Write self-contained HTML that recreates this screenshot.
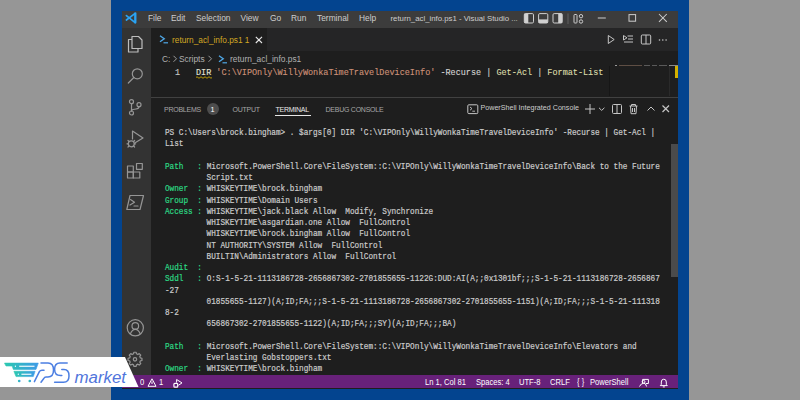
<!DOCTYPE html>
<html><head><meta charset="utf-8">
<style>
*{margin:0;padding:0;box-sizing:border-box}
html,body{width:800px;height:400px;overflow:hidden;background:#969696;font-family:"Liberation Sans",sans-serif;position:relative}
.a{position:absolute}
.t{position:absolute;white-space:pre;line-height:1}
svg{position:absolute;overflow:visible}
.mono{font-family:"Liberation Mono",monospace}
.term{position:absolute;left:164.5px;top:127px;font-family:"Liberation Mono",monospace;font-size:9.7px;color:#cccccc;line-height:11.25px;white-space:pre;transform:scaleX(0.7955);transform-origin:0 0;-webkit-text-stroke-width:0.22px}
.g{color:#2dd985}
.st{top:378px;font-size:8.9px;color:#fff;transform:scaleX(0.855);transform-origin:0 0}
</style></head><body>
<!-- blue frame -->
<div class="a" style="left:111px;top:0;width:578px;height:400px;background:#03448f"></div>
<!-- window -->
<div class="a" style="left:122px;top:10.5px;width:556px;height:378px;background:#1e1e1e"></div>
<!-- title bar -->
<div class="a" style="left:122px;top:10.5px;width:556px;height:17px;background:#3c3c3c"></div>
<!-- activity bar -->
<div class="a" style="left:122px;top:27.5px;width:29px;height:347px;background:#333333"></div>
<!-- tab strip -->
<div class="a" style="left:151px;top:27.5px;width:527px;height:23px;background:#252526"></div>
<div class="a" style="left:151px;top:27.5px;width:115.5px;height:23px;background:#1e1e1e"></div>
<!-- panel border -->
<div class="a" style="left:151px;top:96.5px;width:527px;height:1px;background:#414141"></div>
<!-- status bar -->
<div class="a" style="left:122px;top:374.8px;width:556px;height:13.7px;background:#68217a"></div>

<!-- title menu -->
<div class="t" style="left:148px;top:14px;font-size:8.4px;color:#cccccc">File</div>
<div class="t" style="left:171px;top:14px;font-size:8.4px;color:#cccccc">Edit</div>
<div class="t" style="left:196px;top:14px;font-size:8.4px;color:#cccccc">Selection</div>
<div class="t" style="left:240.5px;top:14px;font-size:8.4px;color:#cccccc">View</div>
<div class="t" style="left:270px;top:14px;font-size:8.4px;color:#cccccc">Go</div>
<div class="t" style="left:291px;top:14px;font-size:8.4px;color:#cccccc">Run</div>
<div class="t" style="left:317px;top:14px;font-size:8.4px;color:#cccccc">Terminal</div>
<div class="t" style="left:359px;top:14px;font-size:8.4px;color:#cccccc">Help</div>
<div class="t" style="left:390.5px;top:14.5px;font-size:7.8px;color:#cccccc">return_acl_info.ps1 - Visual Studio ...</div>

<!-- vscode logo -->
<svg style="left:125px;top:12px" width="13" height="12" viewBox="0 0 13 12">
  <g stroke="#2aa4f4" stroke-linecap="round"><line x1="10.3" y1="1.5" x2="10.3" y2="10.5" stroke-width="2.3"/><line x1="9.8" y1="1.6" x2="1.4" y2="8" stroke-width="1.7"/><line x1="9.8" y1="10.4" x2="1.4" y2="3.6" stroke-width="1.7"/></g>
</svg>

<!-- layout icons -->
<svg style="left:523px;top:13px" width="62" height="12" viewBox="0 0 62 12">
  <rect x="1.3" y="0.6" width="9.2" height="9.4" rx="1.2" fill="none" stroke="#d0d0d0" stroke-width="1"/>
  <rect x="1.3" y="0.6" width="4" height="9.4" fill="#d0d0d0"/>
  <rect x="15.6" y="0.6" width="9.2" height="9.4" rx="1.2" fill="none" stroke="#d0d0d0" stroke-width="1"/>
  <rect x="15.6" y="6.4" width="9.2" height="3.6" fill="#d0d0d0"/>
  <rect x="30" y="0.6" width="9.2" height="9.4" rx="1.2" fill="none" stroke="#d0d0d0" stroke-width="1"/>
  <rect x="35.2" y="0.6" width="4" height="9.4" fill="#d0d0d0"/>
  <line x1="45" y1="0.5" x2="45" y2="11" stroke="#6a6a6a" stroke-width="0.8"/>
  <rect x="51" y="1.5" width="3" height="8.5" rx="0.8" fill="none" stroke="#cccccc" stroke-width="1"/>
  <circle cx="58" cy="3.2" r="1.7" fill="none" stroke="#cccccc" stroke-width="1"/>
  <circle cx="58" cy="8.5" r="1.7" fill="none" stroke="#cccccc" stroke-width="1"/>
</svg>
<!-- window controls -->
<svg style="left:595px;top:12.3px" width="75" height="12" viewBox="0 0 75 12">
  <line x1="2.8" y1="6" x2="10.8" y2="6" stroke="#cccccc" stroke-width="1"/>
  <rect x="34" y="2.6" width="6.6" height="6.6" fill="none" stroke="#cccccc" stroke-width="1"/>
  <path d="M64 2 L71.8 9.8 M71.8 2 L64 9.8" stroke="#cccccc" stroke-width="1.05"/>
</svg>

<!-- activity bar icons -->
<svg style="left:122px;top:27.5px" width="29" height="347" viewBox="0 0 29 347">
  <g fill="none" stroke="#bdbdbd" stroke-width="1.2" stroke-linejoin="round">
    <!-- explorer -->
    <path d="M10 11.5 L6.5 11.5 L6.5 24 L16 24 L16 20.5"/>
    <path d="M10 8.5 L16.5 8.5 L20 12 L20 20.5 L10 20.5 Z"/>
  </g>
  <g fill="none" stroke="#969696" stroke-width="1.2" stroke-linecap="round" stroke-linejoin="round">
    <!-- search -->
    <circle cx="15.3" cy="45.8" r="5"/>
    <line x1="11.8" y1="49.5" x2="6.3" y2="55"/>
    <!-- source control -->
    <circle cx="9.5" cy="73.7" r="2"/>
    <circle cx="17" cy="76.7" r="2"/>
    <circle cx="9.5" cy="85" r="2"/>
    <line x1="9.5" y1="75.7" x2="9.5" y2="83"/>
    <path d="M17 78.7 Q17 80.5 14 81 L11 81.5 Q9.5 82 9.5 83"/>
    <!-- run & debug -->
    <path d="M10.5 111 V103 L21 110 L13.5 114.5"/>
    <circle cx="9.3" cy="115.8" r="3"/>
    <path d="M5 115.8 H6.3 M12.3 115.8 H13.6 M6 112.5 L7 113.5 M12.6 112.5 L11.6 113.5 M6 119 L7 118 M12.6 119 L11.6 118"/>
    <!-- extensions -->
    <rect x="5.5" y="138" width="5.8" height="6"/>
    <rect x="5.5" y="144" width="5.8" height="6"/>
    <rect x="11.3" y="144" width="6.5" height="6"/>
    <rect x="14.5" y="135.5" width="5.8" height="5.8"/>
    <!-- powershell -->
    <path d="M8 167.5 L21.5 167.5 L18 181.5 L4.8 181.5 Z"/>
    <path d="M8.5 171.5 L12.5 174.2 L8 177"/>
    <line x1="12" y1="178" x2="16" y2="178"/>
    <!-- account -->
    <circle cx="13.3" cy="299.8" r="8.1"/>
    <circle cx="13.3" cy="297.9" r="3.3"/>
    <path d="M8.4 305.8 Q10.2 301.4 13.3 301.4 Q16.4 301.4 18.2 305.8"/>
    <!-- settings gear -->
    <circle cx="13" cy="331.35" r="1.7"/>
    <path d="M11.8 324.5 L14.6 324.5 L15 326.5 L16.8 327.4 L18.5 326.2 L20.4 328.1 L19.2 329.8 L19.9 331.6 L21.9 332 L21.9 334.8 L19.9 335.2 L19.2 337 L20.4 338.7 L18.5 340.6 L16.8 339.4 L15 340.3 L14.6 342.3 L11.8 342.3 L11.4 340.3 L9.6 339.4 L7.9 340.6 L6 338.7 L7.2 337 L6.5 335.2 L4.5 334.8 L4.5 332 L6.5 331.6 L7.2 329.8 L6 328.1 L7.9 326.2 L9.6 327.4 L11.4 326.5 Z" transform="translate(13 331.35) scale(0.8) translate(-13.2 -333.4)" stroke-width="1.5"/>
  </g>
</svg>

<!-- tab -->
<svg style="left:159px;top:34.5px" width="10" height="9" viewBox="0 0 10 9">
  <path d="M1 0.8 L5.2 3.8 L1 6.8" fill="none" stroke="#4fa7e6" stroke-width="1.4"/>
  <line x1="4.5" y1="7.8" x2="9" y2="7.8" stroke="#4fa7e6" stroke-width="1.2"/>
</svg>
<div class="t" style="left:172px;top:36px;font-size:8.3px;color:#d2a823">return_acl_info.ps1 1</div>
<svg style="left:255.3px;top:35.5px" width="8" height="8" viewBox="0 0 8 8">
  <path d="M0.8 0.8 L7 7 M7 0.8 L0.8 7" stroke="#e8e8e8" stroke-width="1.1"/>
</svg>
<!-- editor actions -->
<svg style="left:606px;top:34px" width="64" height="11" viewBox="0 0 64 11">
  <g fill="none" stroke="#c5c5c5" stroke-width="1">
    <path d="M2.3 1.5 L8.2 5.5 L2.3 9.5 Z"/>
    <path d="M17.5 1.5 L21 3.8 L17.5 6 Z"/>
    <path d="M21.5 2 H27 M22 5 H27 M18 8 H27"/>
    <rect x="35.3" y="1" width="9.4" height="9" rx="1"/>
    <line x1="40" y1="1" x2="40" y2="10"/>
  </g>
  <g fill="#c5c5c5">
    <circle cx="53.5" cy="6" r="0.8"/><circle cx="56.8" cy="6" r="0.8"/><circle cx="60.1" cy="6" r="0.8"/>
  </g>
</svg>

<!-- breadcrumb -->
<div class="t" style="left:162px;top:55px;font-size:8.4px;color:#b0b0b0">C:</div>
<svg style="left:172px;top:55px" width="40" height="8" viewBox="0 0 40 8">
  <path d="M1.5 0.8 L4.5 3.8 L1.5 6.8 M36.5 0.8 L39.5 3.8 L36.5 6.8" fill="none" stroke="#a9a9a9" stroke-width="0.9"/>
</svg>
<div class="t" style="left:179px;top:55px;font-size:8.4px;color:#b0b0b0">Scripts</div>
<svg style="left:217.5px;top:54.5px" width="10" height="9" viewBox="0 0 10 9">
  <path d="M1 0.8 L5.2 3.8 L1 6.8" fill="none" stroke="#4fa7e6" stroke-width="1.4"/>
  <line x1="4.5" y1="7.8" x2="9" y2="7.8" stroke="#4fa7e6" stroke-width="1.2"/>
</svg>
<div class="t" style="left:230px;top:55px;font-size:8.4px;color:#b0b0b0">return_acl_info.ps1</div>

<!-- current line highlight -->

<!-- editor line -->
<div class="t mono" style="left:174.8px;top:67.9px;font-size:9.2px;color:#c6c6c6;transform:scaleX(0.9235);transform-origin:0 0;-webkit-text-stroke-width:0.12px">1</div>
<div class="t mono" style="left:196px;top:67.9px;font-size:9.2px;color:#d4d4d4;transform:scaleX(0.9235);transform-origin:0 0;-webkit-text-stroke-width:0.12px"><span style="color:#e4e4d4">DIR</span> <span style="color:#ce9178">'C:\VIPOnly\WillyWonkaTimeTravelDeviceInfo'</span> -Recurse | <span style="color:#dcdcaa">Get-Acl</span> | <span style="color:#dcdcaa">Format-List</span></div>
<svg style="left:196px;top:75.8px" width="16" height="3" viewBox="0 0 16 3">
  <path d="M0 1.5 Q1 0 2 1.5 T4 1.5 T6 1.5 T8 1.5 T10 1.5 T12 1.5 T14 1.5 T16 1.5" fill="none" stroke="#cca700" stroke-width="0.9"/>
</svg>
<!-- minimap -->
<div class="a" style="left:615px;top:65.2px;width:63px;height:1.1px;background:linear-gradient(90deg,#9a9a9a 0 3%,#1e1e1e 3% 6%,#5e4e44 6% 43%,#1e1e1e 43% 46%,#5a5a5a 46% 55%,#1e1e1e 55% 59%,#5a5a5a 59% 66%,#1e1e1e 66% 70%,#5a5a5a 70% 82%,#1e1e1e 82% 85%,#8a8a8a 85% 100%)"></div>
<div class="a" style="left:608.6px;top:65.7px;width:1px;height:30px;background:#161616"></div>
<div class="a" style="left:669px;top:66px;width:1px;height:30px;background:#2a2a2a"></div>
<div class="a" style="left:675.2px;top:66.2px;width:2.8px;height:11.8px;background:#d4b000"></div>

<!-- panel header -->
<div class="t" style="left:164px;top:105.5px;font-size:7px;color:#a6a6a6;letter-spacing:-0.25px">PROBLEMS</div>
<div class="a" style="left:206.5px;top:103px;width:12px;height:12px;border-radius:6px;background:#4d4d4d"></div>
<div class="t" style="left:210.6px;top:105.5px;font-size:7.3px;color:#ffffff">1</div>
<div class="t" style="left:232.5px;top:105.5px;font-size:7px;color:#a6a6a6;letter-spacing:-0.25px">OUTPUT</div>
<div class="t" style="left:275.5px;top:105.5px;font-size:7px;color:#e7e7e7;letter-spacing:-0.25px">TERMINAL</div>
<div class="a" style="left:275px;top:115px;width:36px;height:1px;background:#e7e7e7"></div>
<div class="t" style="left:325.5px;top:105.5px;font-size:7px;color:#a6a6a6;letter-spacing:-0.25px">DEBUG CONSOLE</div>

<svg style="left:467px;top:103.5px" width="12" height="10.5" viewBox="0 0 12 10.5">
  <rect x="0.8" y="0.8" width="10" height="8.8" rx="1" fill="none" stroke="#c5c5c5" stroke-width="1"/>
  <path d="M3 3 L5 4.6 L3 6.2 M5.3 7.2 H8" fill="none" stroke="#c5c5c5" stroke-width="0.9"/>
</svg>
<div class="t" style="left:480.5px;top:105.2px;font-size:7.15px;color:#cccccc">PowerShell Integrated Console</div>
<svg style="left:584px;top:102.5px" width="88" height="12" viewBox="0 0 88 12">
  <g fill="none" stroke="#c5c5c5" stroke-width="1">
    <path d="M6 1 V11 M1 6 H11"/>
    <path d="M15 4.8 L17.7 7.4 L20.4 4.8"/>
    <rect x="28.5" y="1.5" width="9" height="9" rx="1"/>
    <line x1="33" y1="1.5" x2="33" y2="10.5"/>
    <path d="M45.5 3 H53.5 M47.5 3 V1.5 H51.5 V3 M46.5 3 L47 10.7 H52 L52.5 3 M48.5 5 V9 M50.5 5 V9"/>
    <path d="M63.5 7.5 L67 4 L70.5 7.5"/>
    <path d="M78.5 2.5 L85 9 M85 2.5 L78.5 9" stroke-width="1.2"/>
  </g>
</svg>

<!-- terminal -->
<div class="term">PS C:\Users\brock.bingham&gt; . $args[0] DIR 'C:\VIPOnly\WillyWonkaTimeTravelDeviceInfo' -Recurse | Get-Acl |
List

<span class="g">Path   :</span> Microsoft.PowerShell.Core\FileSystem::C:\VIPOnly\WillyWonkaTimeTravelDeviceInfo\Back to the Future
         Script.txt
<span class="g">Owner  :</span> WHISKEYTIME\brock.bingham
<span class="g">Group  :</span> WHISKEYTIME\Domain Users
<span class="g">Access :</span> WHISKEYTIME\jack.black Allow  Modify, Synchronize
         WHISKEYTIME\asgardian.one Allow  FullControl
         WHISKEYTIME\brock.bingham Allow  FullControl
         NT AUTHORITY\SYSTEM Allow  FullControl
         BUILTIN\Administrators Allow  FullControl
<span class="g">Audit  :</span>
<span class="g">Sddl   :</span> O:S-1-5-21-1113186728-2656867302-2701855655-1122G:DUD:AI(A;;0x1301bf;;;S-1-5-21-1113186728-2656867
-27
         01855655-1127)(A;ID;FA;;;S-1-5-21-1113186728-2656867302-2701855655-1151)(A;ID;FA;;;S-1-5-21-111318
8-2
         656867302-2701855655-1122)(A;ID;FA;;;SY)(A;ID;FA;;;BA)

<span class="g">Path   :</span> Microsoft.PowerShell.Core\FileSystem::C:\VIPOnly\WillyWonkaTimeTravelDeviceInfo\Elevators and
         Everlasting Gobstoppers.txt
<span class="g">Owner  :</span> WHISKEYTIME\brock.bingham</div>
<!-- terminal scrollbar -->
<div class="a" style="left:671px;top:144px;width:7px;height:133px;background:#4b4b4b"></div>

<!-- status bar items -->
<svg style="left:138px;top:376.5px" width="50" height="11" viewBox="0 0 50 11">
  <g fill="none" stroke="#ffffff" stroke-width="1">
    <path d="M10 9.3 L14 1.8 L18 9.3 Z"/>
    <path d="M14 4.5 V7"/>
    <rect x="35.9" y="6.4" width="3.8" height="3.8" rx="0.9" stroke-width="1.2"/>
    <path d="M38.6 5.6 V2.5 L44 5.9 L40.4 8.3" stroke-linejoin="round"/>
  </g>
</svg>
<div class="t st" style="left:140.3px">0</div>
<div class="t st" style="left:158.8px">1</div>
<div class="t st" style="left:424.5px">Ln 1, Col 81</div>
<div class="t st" style="left:475.6px">Spaces: 4</div>
<div class="t st" style="left:518.6px">UTF-8</div>
<div class="t st" style="left:550px">CRLF</div>
<div class="t st" style="left:577px">{ }</div>
<div class="t st" style="left:590.3px">PowerShell</div>
<svg style="left:638px;top:376.5px" width="32" height="11" viewBox="0 0 32 11">
  <g fill="none" stroke="#ffffff" stroke-width="1">
    <path d="M4.6 6.3 V2.4 H10.4 V6.5 H7.8 M1.5 9.5 Q3 6.2 5.8 6.2 Q7.8 6.2 8.6 9.5"/><circle cx="5.6" cy="4.8" r="1.4"/>
    <path d="M22.3 8.6 L23.3 7.4 V5 Q23.3 2.2 25.8 2.2 Q28.3 2.2 28.3 5 V7.4 L29.3 8.6 Z M24.8 9.9 H26.8"/>
  </g>
</svg>

<!-- watermark logo -->
<svg style="left:0;top:357px" width="139" height="30" viewBox="0 0 139 30">
  <defs>
    <linearGradient id="cg" x1="0" y1="0" x2="1" y2="0">
      <stop offset="0" stop-color="#2cc9b0"/>
      <stop offset="1" stop-color="#3e9ae6"/>
    </linearGradient>
  </defs>
  <path d="M0 0 H125 L138.5 30 H0 Z" fill="#ffffff"/>
  <g fill="url(#cg)">
    <path d="M4.5 6.1 H38.3 L36 12.4 H13.3 L12.2 9 H6 Z" stroke="url(#cg)" stroke-width="0.6" stroke-linejoin="round"/>
    <path d="M13.9 14.3 H35.1 L33.3 19.6 H16 Z" stroke="url(#cg)" stroke-width="0.6" stroke-linejoin="round"/>
    <circle cx="19.2" cy="24" r="1.35"/>
    <circle cx="29.8" cy="24" r="1.35"/>
  </g>
  <g fill="#ffffff">
    <circle cx="15.4" cy="9.25" r="0.65"/>
    <rect x="19.2" y="8.7" width="15.3" height="1.1"/>
    <circle cx="18.3" cy="17.25" r="0.65"/>
    <rect x="21.4" y="16.7" width="10" height="1.1"/>
  </g>
  <g fill="none" stroke="#4c7fe2" stroke-width="1.5" stroke-linecap="round" stroke-linejoin="round">
    <path d="M34.4 24.6 L39.5 14.4 Q40.3 13.2 42 13.2 H44"/>
    <path d="M41 6 H48 Q53.5 6 53.5 13 Q53.5 20 48 20 H46 Q44.5 20 43.8 21.5 L41 25.2"/>
    <path d="M67.2 6 H60 Q54.6 6 54.6 12.3 Q54.6 18.6 60.5 18.6 H61.8"/>
    <path d="M61.8 12.6 H64 Q69 12.6 69 18.9 Q69 25.2 63.5 25.2 H54.6"/>
  </g>
  <text x="74.5" y="25.8" font-family="Liberation Sans" font-style="italic" font-size="16" fill="#5075dc" textLength="51.5" lengthAdjust="spacingAndGlyphs">market</text>
</svg>
</body></html>
